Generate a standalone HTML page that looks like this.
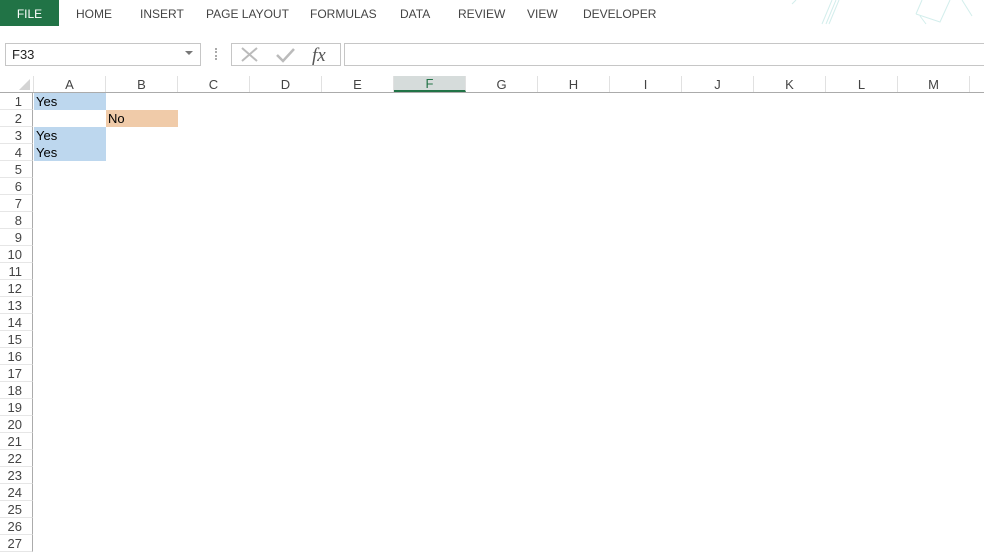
<!DOCTYPE html>
<html><head><meta charset="utf-8"><style>
*{margin:0;padding:0;box-sizing:border-box}
body{width:984px;height:544px;overflow:hidden;background:#fff;font-family:"Liberation Sans",Arial,sans-serif;position:relative}
.a{position:absolute}
.tab{position:absolute;top:0;height:26px;line-height:29px;font-size:12px;color:#444}
.ch{position:absolute;top:76px;height:16px;line-height:18px;font-size:13px;color:#444;text-align:center;width:72px;border-right:1px solid #e1e1e1}
.rh{position:absolute;left:0;width:33px;height:17px;line-height:17px;font-size:13px;color:#444;text-align:right;padding-right:10px;border-bottom:1px solid #e6e6e6;border-right:1px solid #ababab}
.c{position:absolute;height:17px;line-height:18px;font-size:13px;color:#000;padding-left:2px}
</style></head><body>
<div class="a" style="left:0;top:0;width:59px;height:26px;background:#217346;color:#fff;font-size:12px;line-height:28px;text-align:center">FILE</div>
<div class="tab" style="left:76px">HOME</div>
<div class="tab" style="left:140px">INSERT</div>
<div class="tab" style="left:206px">PAGE LAYOUT</div>
<div class="tab" style="left:310px">FORMULAS</div>
<div class="tab" style="left:400px">DATA</div>
<div class="tab" style="left:458px">REVIEW</div>
<div class="tab" style="left:527px">VIEW</div>
<div class="tab" style="left:583px">DEVELOPER</div>
<svg class="a" style="left:780px;top:0" width="204" height="26"><g stroke="#d3eeec" fill="none" stroke-width="1"><path d="M42 24L52 0M46 24L56 0M49 24L59 0M16 0L12 4"/><path d="M136 14L142 0M136 14L160 22L170 0M140 16L146 24"/><path d="M182 0L192 16"/></g></svg>
<div class="a" style="left:5px;top:43px;width:196px;height:23px;border:1px solid #c6c6c6;font-size:13px;line-height:21px;padding-left:6px;color:#222">F33</div>
<svg class="a" style="left:184px;top:50px" width="10" height="6"><path d="M1 1L9 1L5 5Z" fill="#777"/></svg>
<div class="a" style="left:215px;top:48px;width:2px;height:12px;border-left:2px dotted #aaa"></div>
<div class="a" style="left:231px;top:43px;width:110px;height:23px;border:1px solid #c6c6c6"></div>
<svg class="a" style="left:231px;top:43px" width="110" height="23"><path d="M11 5L26 18M26 5L11 18" stroke="#bbb" stroke-width="2" fill="none"/><path d="M46 12L52 18L63 6" stroke="#bbb" stroke-width="2.5" fill="none"/><text x="81" y="18" font-family="Liberation Serif,serif" font-style="italic" font-size="19" fill="#555">fx</text></svg>
<div class="a" style="left:344px;top:43px;width:650px;height:23px;border:1px solid #c6c6c6"></div>
<svg class="a" style="left:18px;top:78px" width="13" height="13"><path d="M12 1L12 12L1 12Z" fill="#d4d4d4"/></svg>
<div class="a" style="left:0;top:92px;width:984px;height:1px;background:#ababab"></div>
<div class="a" style="left:33px;top:76px;width:1px;height:16px;background:#e1e1e1"></div>
<div class="ch" style="left:34px">A</div><div class="ch" style="left:106px">B</div><div class="ch" style="left:178px">C</div><div class="ch" style="left:250px">D</div><div class="ch" style="left:322px">E</div>
<div class="ch" style="left:394px;background:#d6dcdb;color:#217346;border-bottom:2px solid #217346;height:16px;line-height:15px">F</div>
<div class="ch" style="left:466px">G</div><div class="ch" style="left:538px">H</div><div class="ch" style="left:610px">I</div><div class="ch" style="left:682px">J</div><div class="ch" style="left:754px">K</div><div class="ch" style="left:826px">L</div><div class="ch" style="left:898px">M</div>
<div class="rh" style="top:93px">1</div><div class="rh" style="top:110px">2</div><div class="rh" style="top:127px">3</div><div class="rh" style="top:144px">4</div><div class="rh" style="top:161px">5</div><div class="rh" style="top:178px">6</div><div class="rh" style="top:195px">7</div><div class="rh" style="top:212px">8</div><div class="rh" style="top:229px">9</div><div class="rh" style="top:246px">10</div><div class="rh" style="top:263px">11</div><div class="rh" style="top:280px">12</div><div class="rh" style="top:297px">13</div><div class="rh" style="top:314px">14</div><div class="rh" style="top:331px">15</div><div class="rh" style="top:348px">16</div><div class="rh" style="top:365px">17</div><div class="rh" style="top:382px">18</div><div class="rh" style="top:399px">19</div><div class="rh" style="top:416px">20</div><div class="rh" style="top:433px">21</div><div class="rh" style="top:450px">22</div><div class="rh" style="top:467px">23</div><div class="rh" style="top:484px">24</div><div class="rh" style="top:501px">25</div><div class="rh" style="top:518px">26</div><div class="rh" style="top:535px">27</div>
<div class="c" style="left:34px;top:93px;width:72px;background:#bdd7ee">Yes</div>
<div class="c" style="left:106px;top:110px;width:72px;background:#f0cba9">No</div>
<div class="c" style="left:34px;top:127px;width:72px;height:34px;background:#bdd7ee"></div>
<div class="c" style="left:34px;top:127px;width:72px">Yes</div>
<div class="c" style="left:34px;top:144px;width:72px">Yes</div>
</body></html>
